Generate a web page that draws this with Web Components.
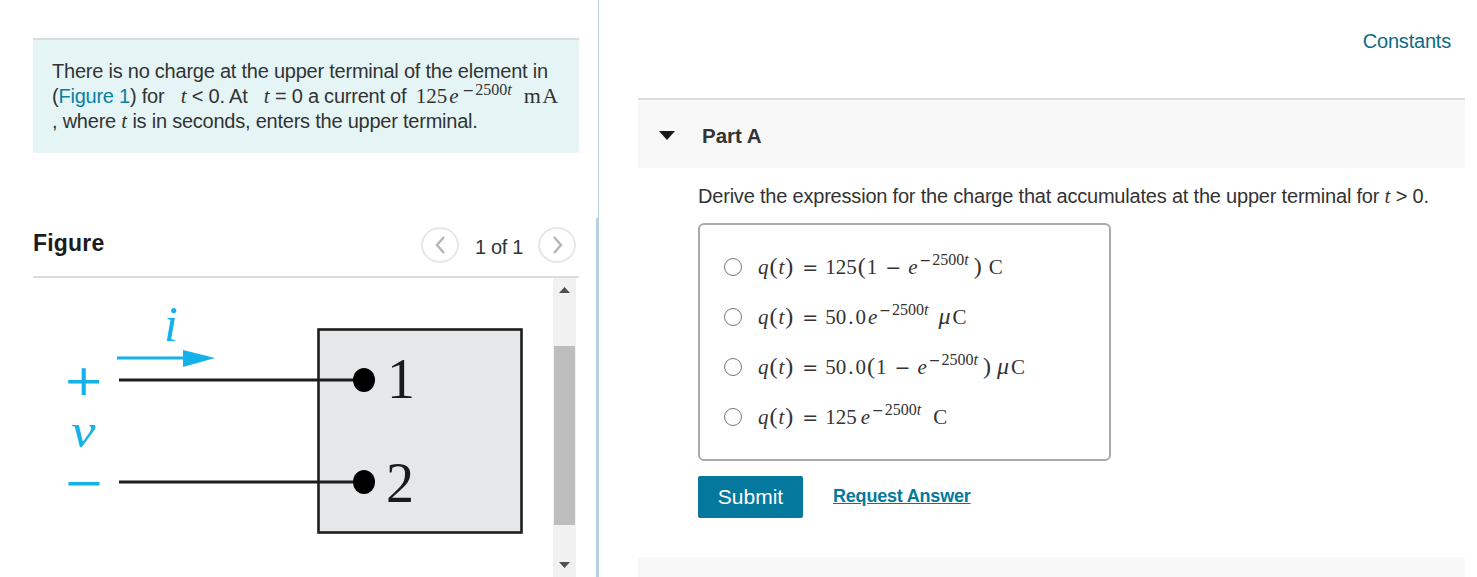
<!DOCTYPE html>
<html>
<head>
<meta charset="utf-8">
<title>Part A</title>
<style>
    html, body { margin: 0; height: 577px; overflow: hidden; background: #fff; }
    body { font-family: "Liberation Sans", Arial, sans-serif; color: #333; display: flex; }
    info-box a { color: #0a7fa3; }
    info-box math-expr { line-height: 0; }
    info-box math-expr sup { vertical-align: 8px; }
    math-expr sup { font-size: 16px; line-height: 0; vertical-align: 9px; margin: 0 4px 0 2px; }
    math-expr sup b { font: 14px/0 "DejaVu Sans", sans-serif; margin-right: 1px; }
    math-expr .op { font: 19px/0 "DejaVu Sans", sans-serif; margin: 0 7px 0 8px; }
    math-expr .p { font-size: 24px; line-height: 0; margin: 0 1px; }
    math-expr .dot { margin: 0 2px; }
    math-expr .ce { margin-left: 2px; }
    math-expr .mu { font-size: 24px; line-height: 0; margin-right: 2px; }
    math-expr .unit { margin-left: 6px; }
    math-expr .wide { font-size: 22px; line-height: 0; letter-spacing: 1.5px; margin-left: 8px; }
</style>
</head>
<body>
<left-pane>
    <info-box>
        <span>There is no charge at the upper terminal of the element in</span><br>
        <span>(</span><a>Figure 1</a><span>) for</span> <math-expr gap><i>t</i></math-expr> <span>&lt; 0. At</span> <math-expr gap><i>t</i></math-expr> <span>= 0 a current of</span>
        <math-expr near>125<i class="ce">e</i><sup style="margin-left:4px"><b>−</b>2500<i>t</i></sup><span class="unit wide">mA</span></math-expr><br><span>, where</span> <math-expr><i>t</i></math-expr> <span>is in seconds, enters the upper terminal.</span>
    </info-box>
    <figure-panel></figure-panel>
</left-pane>
<right-pane>
    <part-header>Part A</part-header>
    <div slot="prompt"><span>Derive the expression for the charge that accumulates at the upper terminal for</span> <math-expr><i>t</i></math-expr> <span>&gt; 0.</span></div>
    <choice-list slot="choices">
        <choice-item><math-expr><i>q</i><span class="p">(</span><i>t</i><span class="p">)</span><span class="op">=</span>125<span class="p">(</span>1<span class="op">−</span><i>e</i><sup><b>−</b>2500<i>t</i></sup><span class="p">)</span><span class="unit">C</span></math-expr></choice-item>
        <choice-item><math-expr><i>q</i><span class="p">(</span><i>t</i><span class="p">)</span><span class="op">=</span>50<span class="dot">.</span>0<i class="ce">e</i><sup><b>−</b>2500<i>t</i></sup><span class="unit"><i class="mu">μ</i>C</span></math-expr></choice-item>
        <choice-item><math-expr><i>q</i><span class="p">(</span><i>t</i><span class="p">)</span><span class="op">=</span>50<span class="dot">.</span>0<span class="p">(</span>1<span class="op">−</span><i>e</i><sup><b>−</b>2500<i>t</i></sup><span class="p">)</span><span class="unit" style="margin-left:5px"><i class="mu">μ</i>C</span></math-expr></choice-item>
        <choice-item><math-expr><i>q</i><span class="p">(</span><i>t</i><span class="p">)</span><span class="op">=</span>125<i class="ce" style="margin-left:4px">e</i><sup><b>−</b>2500<i>t</i></sup><span class="unit" style="margin-left:8px">C</span></math-expr></choice-item>
    </choice-list>
</right-pane>

<script>
class MathExpr extends HTMLElement {
    constructor() {
        super();
        this.attachShadow({ mode: 'open' }).innerHTML = `
            <style>
                :host {
                    display: inline;
                    font-family: "Liberation Serif", "Times New Roman", serif;
                    font-size: 21px;
                    letter-spacing: 0;
                    white-space: nowrap;
                    color: #333;
                }
                :host([gap]) { margin-left: 11px; }
                :host([near]) { margin-left: 4px; }
            </style>
            <slot></slot>
        `;
    }
}

class InfoBox extends HTMLElement {
    constructor() {
        super();
        this.attachShadow({ mode: 'open' }).innerHTML = `
            <style>
                :host {
                    display: block;
                    box-sizing: border-box;
                    width: 546px;
                    height: 115px;
                    padding: 19px 0 0 19px;
                    background: #e5f5f6;
                    border-top: 2px solid #dcdcdc;
                    font-size: 20px;
                    line-height: 25px;
                    letter-spacing: -0.23px;
                    color: #333;
                }
            </style>
            <slot></slot>
        `;
    }
}

class PagerButton extends HTMLElement {
    constructor() {
        super();
        const points = this.getAttribute('dir') === 'next' ? '6,3 13,11 6,19' : '13,3 6,11 13,19';
        this.attachShadow({ mode: 'open' }).innerHTML = `
            <style>
                :host {
                    display: flex;
                    align-items: center;
                    justify-content: center;
                    box-sizing: border-box;
                    width: 38px;
                    height: 36px;
                    margin-bottom: 12px;
                    border: 2px solid #e8e8e8;
                    border-radius: 50%;
                }
            </style>
            <svg width="19" height="22" viewBox="0 0 19 22">
                <polyline points="${points}" fill="none" stroke="#b4b4b4" stroke-width="2.4"/>
            </svg>
        `;
    }
}

class FigureScrollbar extends HTMLElement {
    constructor() {
        super();
        this.attachShadow({ mode: 'open' }).innerHTML = `
            <style>
                :host {
                    display: flex;
                    flex-direction: column;
                    align-items: center;
                    width: 23px;
                    background: #f1f1f1;
                }
                .btn { height: 24px; display: flex; align-items: center; justify-content: center; }
                .gap { height: 44px; }
                .thumb { width: 21px; height: 179px; background: #bdbdbd; }
                .fill { flex: 1; }
            </style>
            <div class="btn"><svg width="11" height="6"><path d="M0 6L5.5 0L11 6Z" fill="#505050"/></svg></div>
            <div class="gap"></div>
            <div class="thumb"></div>
            <div class="fill"></div>
            <div class="btn"><svg width="11" height="6"><path d="M0 0L5.5 6L11 0Z" fill="#505050"/></svg></div>
        `;
    }
}

class CircuitFigure extends HTMLElement {
    constructor() {
        super();
        this.attachShadow({ mode: 'open' }).innerHTML = `
            <style>
                :host { display: block; width: 520px; height: 299px; }
                svg { display: block; filter: blur(0.35px); }
                text { font-family: "Liberation Serif", serif; }
                .blue { fill: #14b1ea; }
                .dark { fill: #1a1a1a; }
                .sign { font-family: "DejaVu Sans", sans-serif; font-size: 43px; }
            </style>
            <svg width="520" height="299" viewBox="33 278 520 299">
                <rect x="318.5" y="329.5" width="203" height="203" fill="#e6e7e9" stroke="#1d1d1d" stroke-width="2.6"/>
                <line x1="119" y1="380" x2="360" y2="380" stroke="#1d1d1d" stroke-width="3"/>
                <line x1="119" y1="482" x2="360" y2="482" stroke="#1d1d1d" stroke-width="3"/>
                <ellipse cx="364" cy="380" rx="11" ry="12" fill="#000"/>
                <ellipse cx="364" cy="482" rx="11" ry="12" fill="#000"/>
                <text class="dark" x="387" y="398" font-size="56">1</text>
                <text class="dark" x="386" y="502" font-size="56">2</text>
                <line x1="117" y1="358" x2="190" y2="358" stroke="#14b1ea" stroke-width="3"/>
                <path d="M183 350L215 358L183 367Z" fill="#14b1ea"/>
                <text class="blue" x="164" y="341" font-size="50" font-style="italic">i</text>
                <text class="blue sign" transform="translate(63 394.5) scale(1.15 1)">+</text>
                <text class="blue" transform="translate(71 447) scale(1.15 1)" font-size="48" font-style="italic">v</text>
                <text class="blue sign" transform="translate(63 497) scale(1.15 1)">−</text>
            </svg>
        `;
    }
}

class FigurePanel extends HTMLElement {
    constructor() {
        super();
        this.attachShadow({ mode: 'open' }).innerHTML = `
            <style>
                :host { display: block; width: 546px; margin-top: 73px; }
                .head {
                    display: flex;
                    align-items: center;
                    height: 50px;
                    border-bottom: 2px solid #dcdcdc;
                }
                .title { font-weight: bold; font-size: 23px; letter-spacing: 0.2px; color: #1c1c1c; flex: 1; margin-bottom: 16px; }
                .count { font-size: 20px; letter-spacing: -0.35px; color: #333; margin: 0 15px 8px 16px; }
                .body { display: flex; height: 299px; }
            </style>
            <div class="head">
                <span class="title">Figure</span>
                <pager-button dir="prev"></pager-button>
                <span class="count">1 of 1</span>
                <pager-button dir="next"></pager-button>
                <span style="width:3px"></span>
            </div>
            <div class="body">
                <circuit-figure></circuit-figure>
                <figure-scrollbar></figure-scrollbar>
            </div>
        `;
    }
}

class LeftPane extends HTMLElement {
    constructor() {
        super();
        this.attachShadow({ mode: 'open' }).innerHTML = `
            <style>
                :host {
                    display: block;
                    box-sizing: border-box;
                    width: 600px;
                    height: 577px;
                    padding: 38px 0 0 33px;
                    background:
                        linear-gradient(#b8d0e4, #b8d0e4) 598px 0 / 1px 218px no-repeat,
                        linear-gradient(#b8d0e4, #b8d0e4) 596px 218px / 3px 359px no-repeat;
                }
            </style>
            <slot></slot>
        `;
    }
}

class PartHeader extends HTMLElement {
    constructor() {
        super();
        this.attachShadow({ mode: 'open' }).innerHTML = `
            <style>
                :host {
                    display: flex;
                    align-items: center;
                    box-sizing: border-box;
                    height: 70px;
                    padding: 3px 0 0 21px;
                    border-top: 2px solid #dcdcdc;
                    background: #f8f8f8;
                    font-weight: bold;
                    font-size: 20.5px;
                    color: #333;
                }
                svg { margin-right: 27px; }
            </style>
            <svg width="16" height="9"><path d="M0 0H16L8 9Z" fill="#1a1a1a"/></svg>
            <slot></slot>
        `;
    }
}

class ChoiceItem extends HTMLElement {
    constructor() {
        super();
        this.attachShadow({ mode: 'open' }).innerHTML = `
            <style>
                :host {
                    display: flex;
                    align-items: center;
                    gap: 16px;
                    height: 50px;
                }
                .radio {
                    box-sizing: border-box;
                    width: 18px;
                    height: 18px;
                    border: 1.5px solid #777;
                    border-radius: 50%;
                    background: #fff;
                }
            </style>
            <span class="radio"></span>
            <slot></slot>
        `;
    }
}

class ChoiceList extends HTMLElement {
    constructor() {
        super();
        this.attachShadow({ mode: 'open' }).innerHTML = `
            <style>
                :host {
                    display: block;
                    box-sizing: border-box;
                    width: 413px;
                    height: 238px;
                    padding: 17px 0 0 24px;
                    border: 2px solid #aaa;
                    border-radius: 6px;
                }
            </style>
            <slot></slot>
        `;
    }
}

class RightPane extends HTMLElement {
    constructor() {
        super();
        this.attachShadow({ mode: 'open' }).innerHTML = `
            <style>
                :host {
                    display: flex;
                    flex-direction: column;
                    box-sizing: border-box;
                    width: 827px;
                    height: 577px;
                    margin-left: 38px;
                }
                .constants {
                    height: 98px;
                    box-sizing: border-box;
                    padding: 29px 14px 0 0;
                    text-align: right;
                    font-size: 20px;
                    letter-spacing: -0.2px;
                    color: #0d6a84;
                    line-height: 25px;
                }
                .content { padding: 0 0 0 60px; flex: 1; }
                .prompt { font-size: 20px; letter-spacing: -0.2px; line-height: 25px; margin: 16px 0 14px 0; color: #333; }
                .actions { display: flex; align-items: center; gap: 30px; margin-top: 15px; }
                .submit {
                    width: 105px; height: 42px;
                    display: flex; align-items: center; justify-content: center;
                    background: #04799d; color: #fff; border-radius: 2px;
                    font-size: 21px;
                }
                .request {
                    font-weight: bold; font-size: 18px; letter-spacing: -0.2px;
                    color: #04799d; text-decoration: underline; margin-top: -2px;
                }
                .strip { height: 20px; background: #f8f8f8; }
            </style>
            <div class="constants">Constants</div>
            <slot></slot>
            <div class="content">
                <div class="prompt"><slot name="prompt"></slot></div>
                <slot name="choices"></slot>
                <div class="actions">
                    <div class="submit">Submit</div>
                    <div class="request">Request Answer</div>
                </div>
            </div>
            <div class="strip"></div>
        `;
    }
}

customElements.define('math-expr', MathExpr);
customElements.define('info-box', InfoBox);
customElements.define('pager-button', PagerButton);
customElements.define('figure-scrollbar', FigureScrollbar);
customElements.define('circuit-figure', CircuitFigure);
customElements.define('figure-panel', FigurePanel);
customElements.define('left-pane', LeftPane);
customElements.define('part-header', PartHeader);
customElements.define('choice-item', ChoiceItem);
customElements.define('choice-list', ChoiceList);
customElements.define('right-pane', RightPane);
</script>
</body>
</html>
